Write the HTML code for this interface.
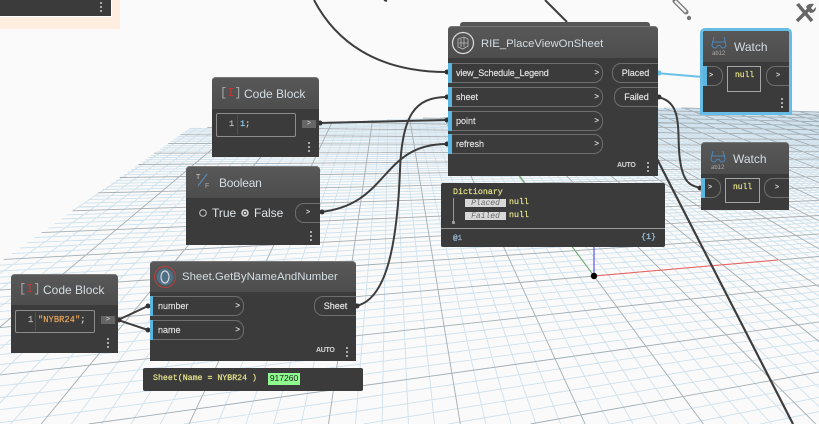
<!DOCTYPE html>
<html><head><meta charset="utf-8">
<style>
html,body{margin:0;padding:0;background:#fafafa;width:819px;height:424px;overflow:hidden}
#s{position:relative;width:819px;height:424px;overflow:hidden;background:#fafafa;font-family:"Liberation Sans",sans-serif}
svg.l{position:absolute;left:0;top:0;overflow:hidden}
.n{position:absolute;background:#3b3b3b;box-sizing:border-box}
.h{position:absolute;left:0;right:0;top:0;background:linear-gradient(#585858,#4d4d4d);border-radius:4px 4px 0 0;border-top:1px solid #777;box-sizing:border-box}
.t{position:absolute;font-size:12px;color:#d3dde3;white-space:nowrap;line-height:14px}
.p{position:absolute;box-sizing:border-box;border:1px solid #6e6e6e;border-left:0;border-radius:0 9px 9px 0;height:20px;color:#e4e4e4;font-size:9px;line-height:18px;padding-left:4px;white-space:nowrap;-webkit-text-stroke:.15px #e4e4e4}
.p b{position:absolute;right:3px;top:0;font-weight:normal;font-size:8px;color:#ddd}
.st{position:absolute;left:0;top:-1px;bottom:-1px;width:4px;background:#5cb5de}
.o{position:absolute;box-sizing:border-box;border:1px solid #6e6e6e;border-right:0;border-radius:9px 0 0 9px;height:20px;color:#e4e4e4;font-size:9px;line-height:18px;text-align:center;white-space:nowrap;-webkit-text-stroke:.15px #e4e4e4}
.d{position:absolute;width:2px;height:2px;background:#aaa;box-shadow:0 4px 0 #aaa,0 8px 0 #aaa}
.a{position:absolute;font-size:7px;font-weight:bold;color:#d8d8d8;letter-spacing:-.3px;line-height:8px}
.m{font-family:"Liberation Mono",monospace;white-space:nowrap;position:absolute;-webkit-text-stroke:.2px}
.box{position:absolute;box-sizing:border-box;border:1px solid #8d8d8d;border-radius:2px}
.g{position:absolute;background:#666;color:#ddd;font-size:7px;line-height:8px;text-align:center;font-family:"Liberation Mono",monospace}
.w{position:absolute;box-sizing:border-box;border:1px solid #a5a5a5}
.k{position:absolute;background:#d8d8d8;color:#6a6a6a;font-family:"Liberation Mono",monospace;font-style:italic;font-size:8px;line-height:9px;text-align:center;width:41px;height:8px;overflow:hidden}
</style></head><body>
<div id="s">
<svg class="l" id="grid" width="819" height="424"></svg>
<svg class="l" width="819" height="424" fill="none">
<path d="M594 276L594 247" stroke="#3a3ae8" stroke-width="1"/>
<path d="M594 276L519 176" stroke="#6cab6c" stroke-width="1"/>
<path d="M594 276L778 260" stroke="#f06060" stroke-width="1"/>
<circle cx="594" cy="276" r="3.2" fill="#000"/>
<g stroke="#3d3d3d" stroke-width="2">
<path d="M314 0C335 40 375 72 447 72"/>
<path d="M545 0L567 22"/>
<path d="M384 0L387 1"/>
<path d="M318 123L447 120"/>
<path d="M320 212C390 205 380 144 447 144"/>
<path d="M356 306C385 300 397 250 400 170C402 115 415 97 447 97"/>
<path d="M118 320L148 306"/>
<path d="M118 320L148 330"/>
<path d="M656 97C685 100 676 135 680 160C683 182 690 187 703 188"/>
<path d="M655 155L793 424" stroke-width="2.2"/>
</g>
<path d="M655 73L703 77" stroke="#6ac0e7" stroke-width="2"/>
<g fill="#333">
<circle cx="447" cy="72" r="2.5"/><circle cx="447" cy="97" r="2.5"/><circle cx="447" cy="120" r="2.5"/><circle cx="447" cy="144" r="2.5"/>
<circle cx="320" cy="123" r="2.5"/><circle cx="322" cy="212" r="2.5"/><circle cx="357" cy="306" r="2.5"/><circle cx="148" cy="306" r="2.5"/><circle cx="148" cy="330" r="2.5"/><circle cx="119" cy="320" r="2.5"/><circle cx="659" cy="97" r="2.5"/><circle cx="700" cy="188" r="2.5"/>
</g>
<circle cx="659" cy="73" r="2.5" fill="#6ac0e7"/>
<!-- eyedropper -->
<path d="M675 1L686 12" stroke="#777" stroke-width="5" stroke-linecap="round"/>
<path d="M675 1L686 12" stroke="#f4f4f4" stroke-width="2.4"/>
<circle cx="689" cy="18" r="2.2" fill="#777"/>
<!-- wrench and screwdriver -->
<path d="M800 7L812 21" stroke="#666" stroke-width="3.4"/>
<path d="M797 21L810 8" stroke="#666" stroke-width="3.4"/>
<path d="M806 7Q808 3 814 4L811 8L813 10L816 7Q816 13 810 13Z" fill="#666"/>
<path d="M796 5L799 3L803 8L801 10Z" fill="#666"/>
</svg>

<!-- top-left partial -->
<div style="position:absolute;left:0;top:0;width:120px;height:29px;background:#fdeee0"></div>
<div style="position:absolute;left:0;top:0;width:112px;height:17px;background:#fff"></div>
<div style="position:absolute;left:0;top:0;width:111px;height:16px;background:#3b3b3b"></div>
<div class="d" style="left:100px;top:2px"></div>

<!-- RIE node -->
<div style="position:absolute;left:460px;top:22px;width:190px;height:8px;background:#555;border-radius:3px 3px 0 0"></div>
<div class="n" style="left:448px;top:26px;width:210px;height:150px;border-radius:4px 4px 0 0">
 <div class="h" style="height:32px"></div>
 <svg class="l" width="40" height="32" fill="none" style="left:3px;top:3px" stroke="#ddd"><circle cx="12" cy="14" r="10.5" stroke-width="1.2"/><path d="M7 10L13 8L17 10L17 17L12 20L7 18ZM10 10L10 18M13 8L13 18M8 14L17 14" stroke-width=".8" stroke="#bbb"/></svg>
 <div class="t" style="left:33px;top:11px;font-size:11.3px">RIE_PlaceViewOnSheet</div>
 <div class="p" style="left:0;top:37px;width:155px;padding-left:8px;letter-spacing:-.15px"><i class="st"></i>view_Schedule_Legend<b>&gt;</b></div>
 <div class="p" style="left:0;top:61px;width:155px;padding-left:8px"><i class="st"></i>sheet<b>&gt;</b></div>
 <div class="p" style="left:0;top:85px;width:155px;padding-left:8px"><i class="st"></i>point<b>&gt;</b></div>
 <div class="p" style="left:0;top:108px;width:155px;padding-left:8px"><i class="st"></i>refresh<b>&gt;</b></div>
 <div class="o" style="left:164px;top:37px;width:46px">Placed</div>
 <div class="o" style="left:166px;top:61px;width:44px">Failed</div>
 <div class="a" style="left:169px;top:136px">AUTO</div>
 <div class="d" style="left:199px;top:136px"></div>
</div>

<!-- Dictionary -->
<div class="n" style="left:441px;top:183px;width:224px;height:64px;color:#e6e48c;border-radius:2px">
 <div class="m" style="left:12px;top:5px;font-size:8.3px;line-height:10px">Dictionary</div>
 <div style="position:absolute;left:12px;top:15px;width:1px;height:25px;background:#999"></div>
 <div style="position:absolute;left:11px;top:38px;width:3px;height:3px;background:#999"></div>
 <div class="k" style="left:24px;top:16px">Placed</div>
 <div class="m" style="left:68px;top:15px;font-size:8.3px;line-height:10px">null</div>
 <div class="k" style="left:24px;top:29px">Failed</div>
 <div class="m" style="left:68px;top:28px;font-size:8.3px;line-height:10px">null</div>
 <div style="position:absolute;left:0;right:0;top:45px;height:1px;background:#9a9a9a"></div>
 <div class="m" style="left:12px;top:51px;font-size:7.5px;line-height:10px;color:#9fc0dc">@1</div>
 <div class="m" style="left:200px;top:50px;font-size:8.3px;line-height:10px;color:#9fc0dc">{1}</div>
</div>

<!-- Watch 1 -->
<div class="n" style="left:700px;top:28px;width:92px;height:87px;border:3px solid #67bce6;border-radius:5px 5px 0 0">
 <div class="h" style="height:31px;border-top:0;border-radius:3px 3px 0 0"></div>
 <svg class="l" width="24" height="28" fill="none" style="left:7px;top:5px"><path d="M4 1L2 9Q2 12 6 12L8 9.500L10 9.500L12 12Q16 12 16 9L14 1M2 6H16" stroke="#4d86b8" stroke-width="1"/><text x="2" y="19" font-family="Liberation Sans" font-size="6" fill="#aaa">ab12</text></svg>
 <div class="t" style="left:31px;top:9px">Watch</div>
 <div class="p" style="left:0;top:35px;width:20px;padding-left:6px;font-size:7px"><i class="st"></i>&gt;</div>
 <div class="w" style="left:24px;top:35px;width:34px;height:26px"><div class="m" style="left:7px;top:4px;font-size:8px;line-height:10px;color:#e6e48c">null</div></div>
 <div class="o" style="left:63px;top:35px;width:23px;font-size:7px">&gt;</div>
 <div class="d" style="left:78px;top:67px"></div>
</div>

<!-- Watch 2 -->
<div class="n" style="left:701px;top:142px;width:88px;height:68px;border-radius:4px 4px 0 0">
 <div class="h" style="height:32px"></div>
 <svg class="l" width="24" height="28" fill="none" style="left:8px;top:8px"><path d="M4 1L2 9Q2 12 6 12L8 9.500L10 9.500L12 12Q16 12 16 9L14 1M2 6H16" stroke="#4d86b8" stroke-width="1"/><text x="2" y="19" font-family="Liberation Sans" font-size="6" fill="#aaa">ab12</text></svg>
 <div class="t" style="left:32px;top:10px">Watch</div>
 <div class="p" style="left:0;top:36px;width:20px;padding-left:7px;font-size:7px"><i class="st"></i>&gt;</div>
 <div class="w" style="left:24px;top:36px;width:35px;height:25px"><div class="m" style="left:7px;top:4px;font-size:8px;line-height:10px;color:#e6e48c">null</div></div>
 <div class="o" style="left:63px;top:36px;width:25px;font-size:7px">&gt;</div>
</div>

<!-- Code Block 1 -->
<div class="n" style="left:212px;top:77px;width:107px;height:80px;border-radius:4px 4px 0 0">
 <div class="h" style="height:32px"></div>
 <div class="m" style="left:8px;top:9px;font-size:12px;line-height:14px;color:#aaa;-webkit-text-stroke:0">[<span style="color:#c33">I</span>]</div>
 <div class="t" style="left:32px;top:10px">Code Block</div>
 <div class="box" style="left:4px;top:36px;width:80px;height:24px"></div>
 <div style="position:absolute;left:25px;top:38px;width:1px;height:20px;background:#505050"></div>
 <div class="m" style="left:17px;top:42px;font-size:8.500px;line-height:10px;color:#bbb">1</div>
 <div class="m" style="left:28px;top:42px;font-size:8.500px;line-height:10px;color:#8ccdf0">1<span style="color:#ccc">;</span></div>
 <div class="g" style="left:90px;top:43px;width:14px;height:8px">&gt;</div>
 <div class="d" style="left:96px;top:65px"></div>
</div>

<!-- Boolean -->
<div class="n" style="left:186px;top:166px;width:134px;height:79px;border-radius:4px 4px 0 0">
 <div class="h" style="height:32px"></div>
 <svg class="l" width="22" height="24" fill="none" style="left:9px;top:6px"><path d="M12 2L3 14" stroke="#5a8ab0" stroke-width="1.2"/><text x="1" y="7" font-family="Liberation Sans" font-size="7" fill="#ccc">T</text><text x="10" y="16" font-family="Liberation Sans" font-size="7" fill="#aaa">F</text></svg>
 <div class="t" style="left:33px;top:10px;letter-spacing:-.2px">Boolean</div>
 <svg class="l" width="134" height="79" fill="none" style="pointer-events:none"><circle cx="17" cy="47" r="3.3" stroke="#ccc"/><circle cx="59" cy="47" r="3" stroke="#ddd" stroke-width="1.5"/><circle cx="59" cy="47" r="1.3" fill="#ddd"/></svg>
 <div class="t" style="left:26px;top:40px;font-size:12px;color:#dfe6ea">True</div>
 <div class="t" style="left:68px;top:40px;font-size:12px;color:#dfe6ea">False</div>
 <div class="o" style="left:109px;top:37px;width:25px;font-size:7px">&gt;</div>
 <div class="d" style="left:124px;top:65px"></div>
</div>

<!-- Code Block 2 -->
<div class="n" style="left:11px;top:274px;width:107px;height:79px;border-radius:4px 4px 0 0">
 <div class="h" style="height:31px"></div>
 <div class="m" style="left:8px;top:8px;font-size:12px;line-height:14px;color:#aaa;-webkit-text-stroke:0">[<span style="color:#c33">I</span>]</div>
 <div class="t" style="left:32px;top:9px">Code Block</div>
 <div class="box" style="left:4px;top:36px;width:80px;height:23px"></div>
 <div style="position:absolute;left:24px;top:38px;width:1px;height:19px;background:#505050"></div>
 <div class="m" style="left:17px;top:41px;font-size:8.800px;line-height:10px;color:#bbb">1</div>
 <div class="m" style="left:27px;top:41px;font-size:8.800px;line-height:10px;color:#e6a45c">"NYBR24"<span style="color:#ccc">;</span></div>
 <div class="g" style="left:90px;top:42px;width:14px;height:8px">&gt;</div>
 <div class="d" style="left:96px;top:64px"></div>
</div>

<!-- Sheet node -->
<div class="n" style="left:150px;top:261px;width:206px;height:100px;border-radius:4px 4px 0 0">
 <div class="h" style="height:31px"></div>
 <svg class="l" width="32" height="30" fill="none" style="left:3px;top:2px"><circle cx="12" cy="14" r="10.5" stroke="#b84040" stroke-width="1"/><circle cx="12" cy="14" r="8.5" fill="#4e6f85"/><ellipse cx="12" cy="14" rx="4" ry="6" stroke="#d8d8d8" stroke-width="1.2"/></svg>
 <div class="t" style="left:32px;top:9px;font-size:11.4px">Sheet.GetByNameAndNumber</div>
 <div class="p" style="left:0;top:35px;width:94px;padding-left:8px"><i class="st" style="width:3px"></i>number<b>&gt;</b></div>
 <div class="p" style="left:0;top:59px;width:94px;padding-left:8px"><i class="st" style="width:3px"></i>name<b>&gt;</b></div>
 <div class="o" style="left:164px;top:35px;width:42px">Sheet</div>
 <div class="a" style="left:166px;top:86px">AUTO</div>
 <div class="d" style="left:196px;top:86px"></div>
</div>

<!-- Sheet preview -->
<div class="n" style="left:143px;top:368px;width:220px;height:23px;border-radius:2px">
 <div class="m" style="left:10px;top:6px;font-size:8.250px;line-height:10px;color:#e6e48c">Sheet(Name = NYBR24 )</div>
 <div style="position:absolute;left:125px;top:5px;width:32px;height:12px;background:#8efb8e;color:#222;font-size:8.500px;line-height:11px;text-align:center">917260</div>
</div>
</div>
<script>
(function(){
var VP1=[390,0],VP2=[2056,149],O=[594,276],g=.0482,h=.1013,minW=.04;
function P(u,v){var w=g*u+h*v+1;return [(g*VP2[0]*u+h*VP1[0]*v+O[0])/w,(g*VP2[1]*u+h*VP1[1]*v+O[1])/w];}
var poly=[[0,262],[190,128],[660,108],[819,107],[819,424],[0,424]];
var umin=-8,umax=40,vmin=-40,vmax=17,a=[],b=[],u,v,i,p,q,lo;
function clip(p,q){
 var t0=0,t1=1,dx=q[0]-p[0],dy=q[1]-p[1],j;
 for(j=0;j<poly.length;j++){
  var A=poly[j],B=poly[(j+1)%poly.length];
  var nx=-(B[1]-A[1]),ny=B[0]-A[0];
  var f=nx*(p[0]-A[0])+ny*(p[1]-A[1]),d=nx*dx+ny*dy;
  if(d===0){if(f<0)return null;continue;}
  var t=-f/d;
  if(d>0){if(t>t0)t0=t;}else{if(t<t1)t1=t;}
  if(t0>=t1)return null;
 }
 return 'M'+(p[0]+dx*t0).toFixed(1)+' '+(p[1]+dy*t0).toFixed(1)+'L'+(p[0]+dx*t1).toFixed(1)+' '+(p[1]+dy*t1).toFixed(1);
}
function add(p,q,major){var s=clip(p,q);if(s)(major?b:a).push(s);}
for(i=umin*5;i<=umax*5;i++){u=i/5;lo=Math.max(vmin,(minW-1-g*u)/h);add(P(u,lo),P(u,vmax),i%5==0);}
for(i=vmin*5;i<=vmax*5;i++){v=i/5;lo=Math.max(umin,(minW-1-h*v)/g);if(lo>=umax)continue;add(P(lo,v),P(umax,v),i%5==0);}
document.getElementById('grid').innerHTML='<path d="'+a.join('')+'" fill="none" stroke="#cfe1ec" stroke-width=".9"/><path d="'+b.join('')+'" fill="none" stroke="#a3aeb4" stroke-width=".9"/>';
})();
</script>
</body></html>
